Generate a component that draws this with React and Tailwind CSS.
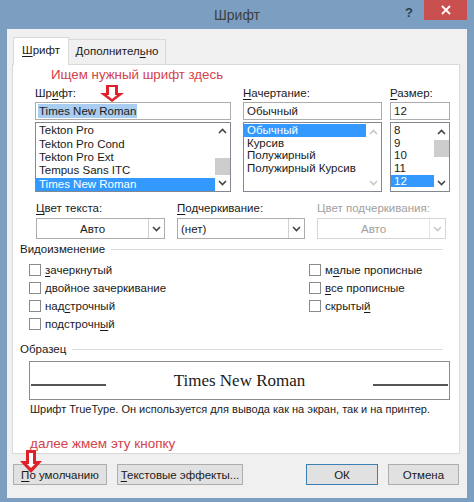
const U = ({ children }) => <span className="underline underline-offset-2">{children}</span>;

function Chevron({ up, disabled }) {
  return (
    <svg width="9" height="6" viewBox="0 0 9 6">
      <polyline
        points={up ? "1,5 4.5,1.5 8,5" : "1,1 4.5,4.5 8,1"}
        fill="none"
        stroke={disabled ? "#c8c8c8" : "#444"}
        strokeWidth="1.6"
      />
    </svg>
  );
}

function Scrollbar({ thumbTop, disabled }) {
  return (
    <div className="w-[15px] flex flex-col bg-white">
      <div className="h-[17px] flex items-center justify-center">
        <Chevron up disabled={disabled} />
      </div>
      <div className="flex-1">
        {!disabled && <div className={`h-[17px] bg-[#cdcdcd] ${thumbTop}`} />}
      </div>
      <div className="h-[17px] flex items-center justify-center">
        <Chevron disabled={disabled} />
      </div>
    </div>
  );
}

function ListBox({ items, selected, thumbTop, disabled, rowH }) {
  return (
    <div className="h-[70px] mt-[2px] border border-[#828790] bg-white flex">
      <div className="flex-1 pt-[1px]">
        {items.map((it) => (
          <div
            key={it}
            className={`${rowH} leading-[13px] pl-[3px] flex items-center ${
              it === selected ? "bg-[#3399ff] text-white" : "text-[#1a1a1a]"
            }`}
          >
            {it}
          </div>
        ))}
      </div>
      <Scrollbar thumbTop={thumbTop} disabled={disabled} />
    </div>
  );
}

function Select({ value, center, disabled }) {
  return (
    <div
      className={`h-[21px] mt-[3px] border flex bg-white ${
        disabled ? "border-[#d5d5d5] text-[#a0a0a0]" : "border-[#acacac] text-[#1a1a1a]"
      }`}
    >
      <div className={`flex-1 flex items-center px-[3px] ${center ? "justify-center" : ""}`}>{value}</div>
      <div
        className={`w-[16px] flex items-center justify-center border-l ${
          disabled ? "border-[#e5e5e5]" : "border-[#d0d0d0]"
        }`}
      >
        <Chevron disabled={disabled} />
      </div>
    </div>
  );
}

function Check({ children }) {
  return (
    <div className="h-[18px] flex items-center gap-[4px]">
      <div className="w-[12px] h-[12px] border border-[#8a8a8a] bg-white" />
      <span>{children}</span>
    </div>
  );
}

function GroupTitle({ children }) {
  return (
    <div className="flex items-center gap-[6px] pr-[16px] text-[#1a1a1a]">
      <span>{children}</span>
      <div className="flex-1 h-px bg-[#dcdcdc]" />
    </div>
  );
}

function RedArrow({ className, tall }) {
  return tall ? (
    <svg className={className} width="22" height="23" viewBox="0 0 22 23">
      <path d="M6 0 H16 V11 H22 L11 23 L0 11 H6 Z" fill="#e0202a" />
      <path d="M9 3 H13 V14 H15 L11 18 L7 14 H9 Z" fill="#ffffff" />
    </svg>
  ) : (
    <svg className={className} width="24" height="17" viewBox="0 0 24 17">
      <path d="M6 0 H18 V8 H24 L12 17 L0 8 H6 Z" fill="#e0202a" />
      <path d="M9 2 H15 V10 H17 L12 14 L7 10 H9 Z" fill="#ffffff" />
    </svg>
  );
}

function Button({ children, primary, className }) {
  return (
    <div
      className={`h-[21px] flex items-center justify-center border bg-[#e1e1e1] text-[#1a1a1a] ${
        primary ? "border-[#3c7fb1]" : "border-[#adadad]"
      } ${className}`}
    >
      {children}
    </div>
  );
}

export default function App() {
  return (
    <div className="w-[474px] h-[502px] bg-[#7b9ec1] flex flex-col font-['Liberation_Sans',sans-serif] text-[11.5px] leading-[14px]">
      {/* title bar */}
      <div className="h-[29px] shrink-0 grid grid-cols-[1fr_auto_1fr]">
        <div />
        <div className="text-[14px] text-[#404040] pt-[6px] leading-[18px]">Шрифт</div>
        <div className="flex justify-end items-start">
          <div className="mt-[6px] mr-[11px] text-[13px] font-bold text-[#2c3e55]">?</div>
          <div className="w-[43px] h-[20px] mr-[7px] bg-[#c9504f] flex items-center justify-center">
            <svg width="10" height="10" viewBox="0 0 10 10">
              <path d="M1 1 L9 9 M9 1 L1 9" stroke="#fff" strokeWidth="1.8" />
            </svg>
          </div>
        </div>
      </div>

      {/* dialog body */}
      <div className="ml-[7px] w-[460px] h-[469px] shrink-0 bg-[#f0f0f0]">
        {/* tabs */}
        <div className="flex items-end ml-[6px] pt-[8px]">
          <div className="relative z-10 -mb-px h-[28px] w-[56px] bg-white border border-b-0 border-[#d9d9d9] flex items-center justify-center pb-[4px] text-[#1a1a1a]">
            <span>
              <U>Ш</U>рифт
            </span>
          </div>
          <div className="h-[25px] w-[97px] border border-l-0 border-b-0 border-[#d9d9d9] bg-[#f0f0f0] flex items-center justify-center pb-[2px] text-[#1a1a1a]">
            <span>
              Дополнител<U>ь</U>но
            </span>
          </div>
        </div>

        {/* tab content */}
        <div className="relative ml-[5px] w-[448px] h-[390px] bg-white border border-[#d9d9d9]">
          <div className="ml-[38px] pt-[2px] text-[13.3px] leading-[16px] text-[#d2434a]">Ищем нужный шрифт здесь</div>
          <RedArrow className="absolute left-[87px] top-[20px]" />

          <div className="flex ml-[22px] mt-[3px]">
            <div className="w-[196px]">
              <div className="text-[#1a1a1a]">
                Шр<U>и</U>фт:
              </div>
              <div className="h-[18px] mt-[2px] border border-[#acacac] flex items-center px-[2px]">
                <span className="bg-[#a8cdf0] text-[#1a1a1a] px-px">Times New Roman</span>
              </div>
              <ListBox
                items={["Tekton Pro", "Tekton Pro Cond", "Tekton Pro Ext", "Tempus Sans ITC", "Times New Roman"]}
                selected="Times New Roman"
                thumbTop="mt-[18px]"
                rowH="h-[13.4px]"
              />
            </div>
            <div className="w-[139px] ml-[12px]">
              <div className="text-[#1a1a1a]">
                <U>Н</U>ачертание:
              </div>
              <div className="h-[18px] mt-[2px] border border-[#acacac] flex items-center px-[3px] text-[#1a1a1a]">
                Обычный
              </div>
              <ListBox
                items={["Обычный", "Курсив", "Полужирный", "Полужирный Курсив"]}
                selected="Обычный"
                disabled
                rowH="h-[12.7px]"
              />
            </div>
            <div className="w-[60px] ml-[8px]">
              <div className="text-[#1a1a1a]">
                <U>Р</U>азмер:
              </div>
              <div className="h-[18px] mt-[2px] border border-[#acacac] flex items-center px-[3px] text-[#1a1a1a]">
                12
              </div>
              <ListBox items={["8", "9", "10", "11", "12"]} selected="12" thumbTop="mt-0" rowH="h-[12.7px]" />
            </div>
          </div>

          <div className="flex ml-[23px] mt-[9px] gap-[12px]">
            <div className="w-[129px]">
              <div className="text-[#1a1a1a]">
                <U>Ц</U>вет текста:
              </div>
              <Select value="Авто" center />
            </div>
            <div className="w-[128px]">
              <div className="text-[#1a1a1a]">
                <U>П</U>одчеркивание:
              </div>
              <Select value="(нет)" />
            </div>
            <div className="w-[129px]">
              <div className="text-[#a0a0a0] whitespace-nowrap">Цвет подчеркивания:</div>
              <Select value="Авто" center disabled />
            </div>
          </div>

          <div className="ml-[7px] mt-[3px]">
            <GroupTitle>Видоизменение</GroupTitle>
          </div>
          <div className="ml-[16px] mt-[5px] flex text-[#1a1a1a]">
            <div className="w-[280px] flex flex-col">
              <Check>
                <U>з</U>ачеркнутый
              </Check>
              <Check>двойное зачеркивание</Check>
              <Check>
                над<U>с</U>трочный
              </Check>
              <Check>
                подстрочн<U>ы</U>й
              </Check>
            </div>
            <div className="flex flex-col">
              <Check>
                м<U>а</U>лые прописные
              </Check>
              <Check>
                <U>в</U>се прописные
              </Check>
              <Check>
                скрыты<U>й</U>
              </Check>
            </div>
          </div>

          <div className="ml-[7px] mt-[9px]">
            <GroupTitle>Образец</GroupTitle>
          </div>
          <div className="ml-[16px] mt-[5px] w-[421px] h-[39px] border border-[#8c8c8c] flex items-center px-[1px]">
            <div className="w-[75px] h-[2px] bg-[#555] mt-[8px]" />
            <div className="flex-1 text-center font-['Liberation_Serif',serif] text-[17px] leading-[20px] text-[#1a1a1a]">
              Times New Roman
            </div>
            <div className="w-[75px] h-[2px] bg-[#555] mt-[8px]" />
          </div>
          <div className="ml-[17px] mt-[2px] text-[11px] text-[#1a1a1a] whitespace-nowrap">
            Шрифт TrueType. Он используется для вывода как на экран, так и на принтер.
          </div>
          <div className="ml-[17px] mt-[20px] text-[13.5px] leading-[16px] text-[#d2434a]">далее жмем эту кнопку</div>
        </div>

        {/* buttons */}
        <div className="relative flex ml-[6px] mt-[10px]">
          <Button className="w-[94px]">
            <span>
              <U>П</U>о умолчанию
            </span>
          </Button>
          <Button className="w-[126px] ml-[10px]">
            <span>
              <U>Т</U>екстовые эффекты...
            </span>
          </Button>
          <Button primary className="w-[72px] ml-[63px]">
            ОК
          </Button>
          <Button className="w-[71px] ml-[10px]">Отмена</Button>
          <RedArrow tall className="absolute left-[7px] -top-[14px]" />
        </div>
      </div>
    </div>
  );
}
